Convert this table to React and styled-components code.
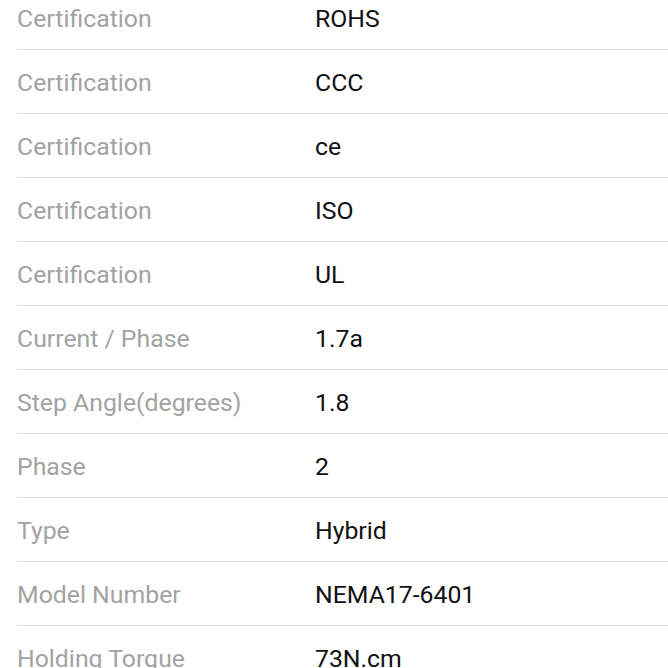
import styled, { createGlobalStyle } from "styled-components";

const GlobalStyle = createGlobalStyle`
  html, body {
    margin: 0;
    padding: 0;
    background: #ffffff;
    overflow: hidden;
  }
  body {
    font-family: Roboto, "Liberation Sans", Arial, sans-serif;
  }
`;

const SpecList = styled.ul`
  list-style: none;
  margin: -14px 0 0 17px;
  padding: 0;
`;

const SpecRow = styled.li`
  box-sizing: border-box;
  display: grid;
  grid-template-columns: 298px 1fr;
  align-items: center;
  height: 64px;
  padding-top: 2px;
  border-bottom: 1px solid #dadada;
  font-size: 24.8px;
`;

const Label = styled.span`
  color: #a3a3a3;
`;

const Value = styled.span`
  color: #111111;
`;

const specs = [
  ["Certification", "ROHS"],
  ["Certification", "CCC"],
  ["Certification", "ce"],
  ["Certification", "ISO"],
  ["Certification", "UL"],
  ["Current / Phase", "1.7a"],
  ["Step Angle(degrees)", "1.8"],
  ["Phase", "2"],
  ["Type", "Hybrid"],
  ["Model Number", "NEMA17-6401"],
  ["Holding Torque", "73N.cm"],
];

const App = () => (
  <>
    <GlobalStyle />
    <SpecList>
      {specs.map(([label, value], i) => (
        <SpecRow key={i}>
          <Label>{label}</Label>
          <Value>{value}</Value>
        </SpecRow>
      ))}
    </SpecList>
  </>
);

export default App;
